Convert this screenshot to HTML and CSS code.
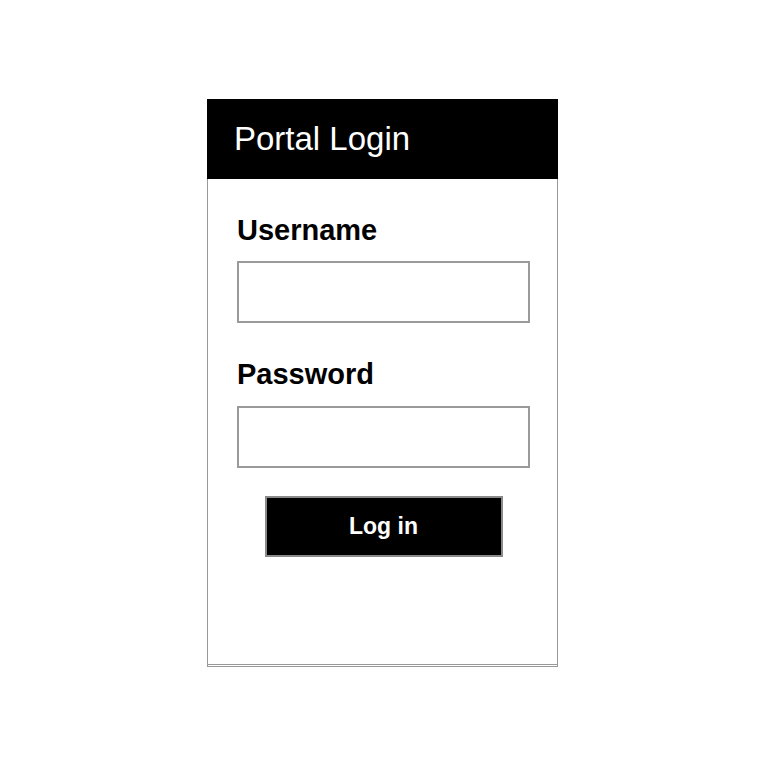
FILE: index.html
```html
<!DOCTYPE html>
<html lang="en">
<head>
<meta charset="utf-8">
<title>Portal Login</title>
<link rel="stylesheet" href="styles.css">
</head>
<body>
<div class="card">
  <div class="card-header">Portal Login</div>
  <form class="card-body">
    <label class="field-label" for="user">Username</label>
    <input class="field-input" id="user" type="text">
    <label class="field-label field-label-second" for="pass">Password</label>
    <input class="field-input" id="pass" type="password">
    <button class="login-btn" type="button">Log in</button>
  </form>
</div>
</body>
</html>
```
FILE: styles.css
```css
html, body {
  margin: 0;
  padding: 0;
  background: #ffffff;
}
body {
  font-family: "Liberation Sans", Arial, sans-serif;
  padding-top: 99px;
}
.card {
  width: 349px;
  margin: 0 0 0 207px;
  border: 1px solid #999999;
  border-top: none;
  border-bottom: 3px double #999999;
  background: #ffffff;
}
.card-header {
  height: 80px;
  background: #000000;
  color: #ffffff;
  font-size: 33px;
  display: flex;
  align-items: center;
  padding-left: 27px;
  margin: 0 -1px;
}
.card-body {
  display: flex;
  flex-direction: column;
  padding: 35px 27px 107px 29px;
  margin: 0;
}
.field-label {
  font-size: 29px;
  font-weight: bold;
  line-height: 32px;
  color: #000000;
}
.field-label-second {
  margin-top: 35px;
}
.field-input {
  box-sizing: border-box;
  width: 293px;
  height: 62px;
  margin: 15px 0 0 0;
  border: 2px solid #9a9a9a;
  background: #ffffff;
  padding: 0 8px;
  font-size: 20px;
  font-family: "Liberation Sans", Arial, sans-serif;
  outline: none;
}
.field-label-second + .field-input {
  margin-top: 16px;
}
.login-btn {
  box-sizing: border-box;
  align-self: center;
  width: 238px;
  height: 61px;
  margin-top: 28px;
  background: #000000;
  color: #ffffff;
  border: 2px solid #8a8a8a;
  font-family: "Liberation Sans", Arial, sans-serif;
  font-size: 23px;
  font-weight: bold;
  cursor: pointer;
}
```
